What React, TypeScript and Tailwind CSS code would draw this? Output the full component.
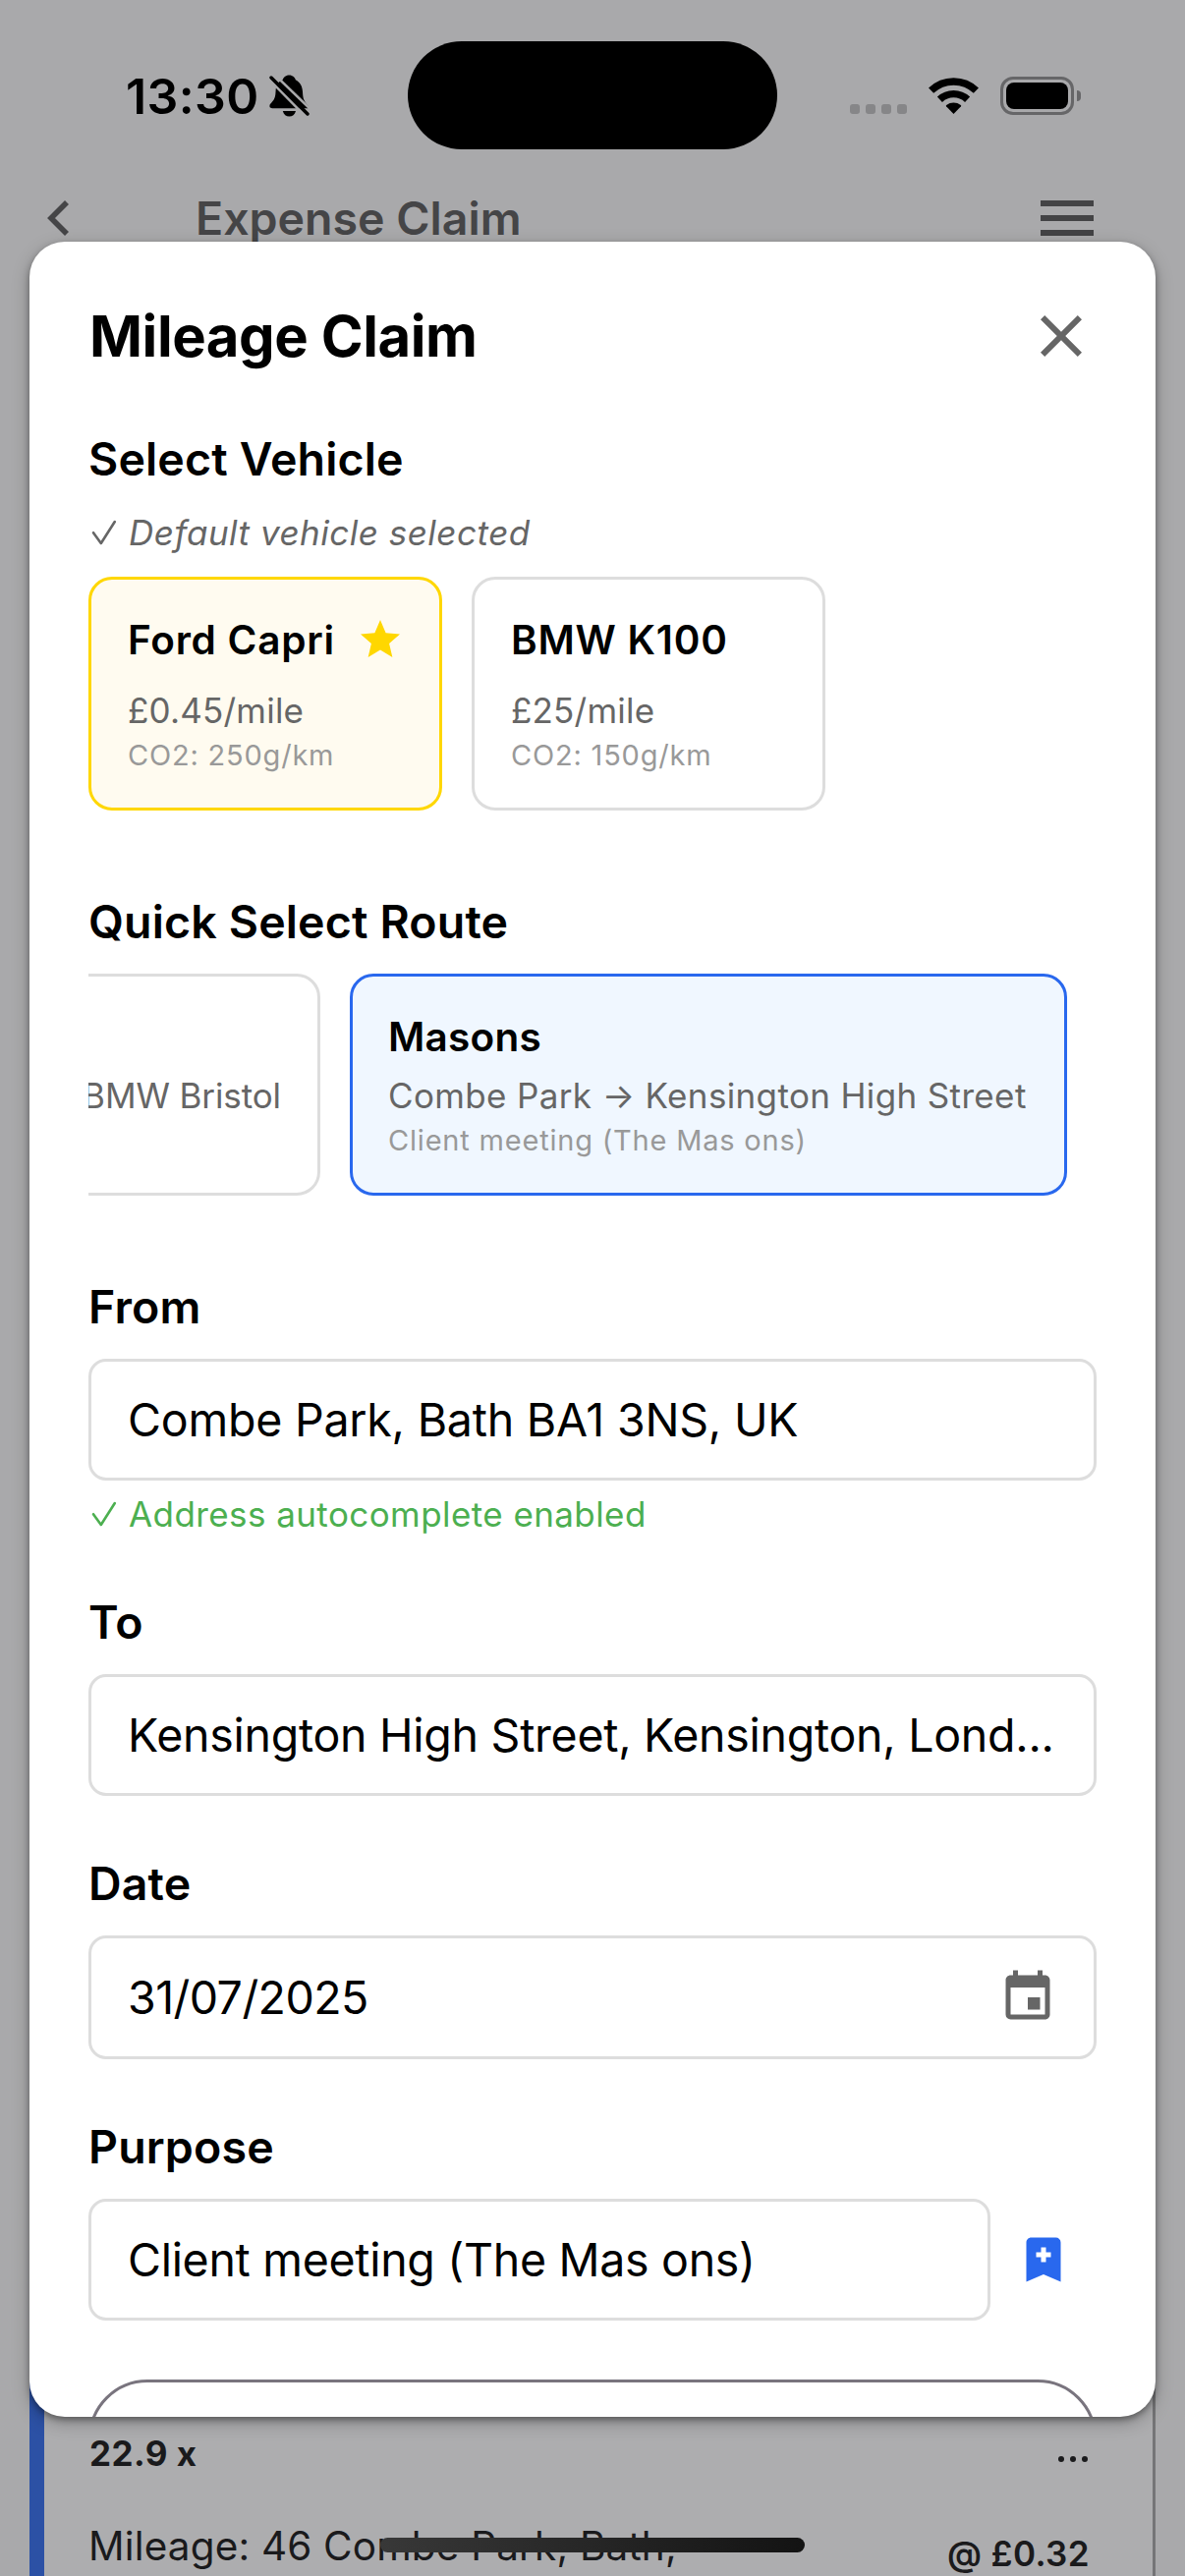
import React from "react";
import { MdClose, MdEvent, MdStar } from "react-icons/md";

interface Vehicle {
  name: string;
  rate: string;
  co2: string;
  isDefault: boolean;
}

const vehicles: Vehicle[] = [
  { name: "Ford Capri", rate: "£0.45/mile", co2: "CO2: 250g/km", isDefault: true },
  { name: "BMW K100", rate: "£25/mile", co2: "CO2: 150g/km", isDefault: false },
];

const BellSlashIcon: React.FC = () => (
  <svg className="w-[41px] h-[43px]" viewBox="0 0 41 43" fill="none">
    <path
      d="M20.3 0.5C24 0.5 26.2 3 26.8 5.2C31.5 7.6 33.8 12 34 17.5C34.2 23.5 35.2 26.5 38 29.8C39.6 31.5 40.5 32.8 39.6 34.2H3C0.6 34.2 0 32.6 0.6 30.8C1.2 29 4.4 27.4 5.8 22.8C6.8 19.5 6.4 15.5 7 13C8 8.5 10.5 6.6 13.8 5.2C14.4 3 16.6 0.5 20.3 0.5Z"
      fill="black"
    />
    <path d="M13.8 37H27C26 40.6 23.6 42.6 20.4 42.6C17.2 42.6 14.8 40.6 13.8 37Z" fill="black" />
    <path d="M4 -1.5L43 36.2" stroke="#a9a9ab" strokeWidth="2.6" />
    <path d="M-2 2.8L37 42.6" stroke="#a9a9ab" strokeWidth="2.6" />
    <path d="M2 3L39 40" stroke="black" strokeWidth="3.4" strokeLinecap="round" />
  </svg>
);

const WifiIcon: React.FC = () => (
  <svg className="w-[51px] h-[37px]" viewBox="0 0 51 37" fill="none">
    <path d="M2.6 13.2A33 33 0 0 1 48.4 13.2" stroke="black" strokeWidth="7.4" />
    <path d="M11.4 22.2A20.5 20.5 0 0 1 39.6 22.2" stroke="black" strokeWidth="7.4" />
    <path
      d="M25.5 37L18 29.3C17.6 28.8 17.7 28.3 18.2 27.9C22.4 24.6 28.6 24.6 32.8 27.9C33.3 28.3 33.4 28.8 33 29.3Z"
      fill="black"
    />
  </svg>
);

const CheckIcon: React.FC = () => (
  <svg className="ml-[3px] mr-[12px] w-[26px] h-[26px]" viewBox="0 0 26 26" fill="none">
    <path
      d="M2 13.2L9.8 24L23.8 2"
      stroke="currentColor"
      strokeWidth="2.6"
      strokeLinecap="round"
      strokeLinejoin="round"
    />
  </svg>
);

const StatusBar: React.FC = () => (
  <div className="flex h-[193px] pt-[42px] pl-[128px]">
    <div className="flex w-[287px] h-[110px] items-center">
      <span className="w-[146px] pt-[2px] text-[50px] leading-[60px] font-semibold tracking-[0.4px] text-black">
        13:30
      </span>
      <BellSlashIcon />
    </div>
    <div className="w-[376px] h-[110px] rounded-full bg-black" />
    <div className="flex h-[110px] ml-[74px] pt-[36px]">
      <div className="flex gap-[6px] pt-[28px]">
        {[0, 1, 2, 3].map((dot) => (
          <div key={dot} className="w-[10px] h-[10px] rounded-[3px] bg-[#868688]" />
        ))}
      </div>
      <div className="ml-[22px] pt-px">
        <WifiIcon />
      </div>
      <div className="ml-[22px] w-[75px] h-[39px] rounded-[13px] border-[3px] border-[#666668] p-[3px]">
        <div className="w-full h-full rounded-[8px] bg-black" />
      </div>
      <div className="mt-[14px] ml-[3px] w-[4px] h-[11px] rounded-r-full bg-[#666668]" />
    </div>
  </div>
);

const PageHeader: React.FC = () => (
  <div className="flex h-[58px] items-center pl-[48px]">
    <svg className="w-[22px] h-[36px]" viewBox="0 0 22 36" fill="none">
      <path d="M20 2L4 18L20 34" stroke="#454547" strokeWidth="5.6" />
    </svg>
    <h1 className="ml-[129px] flex-1 text-[46.5px] leading-[58px] font-semibold text-[#454547]">
      Expense Claim
    </h1>
    <div className="mr-[93px] flex flex-col gap-[9px]">
      <div className="w-[54px] h-[6px] bg-[#434345]" />
      <div className="w-[54px] h-[6px] bg-[#434345]" />
      <div className="w-[54px] h-[6px] bg-[#434345]" />
    </div>
  </div>
);

const ExpenseRow: React.FC = () => (
  <div className="mx-[30px] flex flex-1 justify-between border-l-[15px] border-r-[3px] border-l-[#2c51a5] border-r-[#757577] bg-[#adadaf] pl-[45px] pr-[64px] text-[#1a1a1c]">
    <div className="flex flex-col justify-end">
      <p className="pl-px text-[35px] leading-[48px] font-bold tracking-[0.5px]">22.9 x</p>
      <p className="mt-[41px] text-[40.5px] leading-[60px] tracking-[0.16px]">
        Mileage: 46 Combe Park, Bath,
      </p>
    </div>
    <div className="flex flex-col items-end justify-end">
      <div className="mr-[2px] flex gap-[6px]">
        <div className="w-[6px] h-[6px] rounded-full bg-[#1a1a1c]" />
        <div className="w-[6px] h-[6px] rounded-full bg-[#1a1a1c]" />
        <div className="w-[6px] h-[6px] rounded-full bg-[#1a1a1c]" />
      </div>
      <p className="mt-[69px] -mb-px text-[35px] leading-[48px] font-semibold tracking-[0.4px]">
        @ £0.32
      </p>
    </div>
  </div>
);

const SectionTitle: React.FC<{ children: React.ReactNode }> = ({ children }) => (
  <h3 className="text-[46.5px] leading-[60px] font-semibold tracking-[0.15px] whitespace-nowrap">
    {children}
  </h3>
);

const VehicleCard: React.FC<{ vehicle: Vehicle }> = ({ vehicle }) => (
  <div
    className={
      vehicle.isDefault
        ? "w-[360px] h-[238px] rounded-[24px] border-[3px] border-[#ffd700] bg-[#fffbf0] pt-[37px] pl-[37px]"
        : "w-[360px] h-[238px] rounded-[24px] border-[3px] border-[#dddddd] bg-white pt-[37px] pl-[37px]"
    }
  >
    <div className="flex h-[48px] items-center">
      <span className="pt-px text-[40.5px] leading-[48px] font-semibold tracking-[0.75px] whitespace-nowrap">
        {vehicle.name}
      </span>
      {vehicle.isDefault && <MdStar className="ml-[22px] size-[48px] shrink-0 text-[#ffd700]" />}
    </div>
    <p className="mt-[27px] text-[35px] leading-[42px] tracking-[0.2px] text-[#666666]">
      {vehicle.rate}
    </p>
    <p className="mt-[7px] text-[29px] leading-[36px] tracking-[0.8px] text-[#999999]">
      {vehicle.co2}
    </p>
  </div>
);

const App: React.FC = () => {
  return (
    <div className="relative w-[1206px] h-[2622px] overflow-hidden bg-[#a9a9ab] font-[Inter,'Liberation_Sans',sans-serif] text-black">
      {/* Dimmed page behind the dialog */}
      <div className="flex h-full flex-col">
        <StatusBar />
        <PageHeader />
        <div className="h-[1950px]" />
        <ExpenseRow />
      </div>

      {/* Mileage dialog */}
      <div className="absolute left-[30px] top-[246px] w-[1146px] h-[2214px] overflow-hidden rounded-[36px] bg-white px-[60px] pt-[60px] shadow-[0_6px_18px_rgba(0,0,0,0.25),0_3px_6px_rgba(0,0,0,0.35)]">
        <div className="flex h-[72px] items-center justify-between">
          <h2 className="pl-px text-[58px] leading-[72px] font-bold tracking-[-0.43px]">
            Mileage Claim
          </h2>
          <MdClose className="size-[72px] text-[#666666]" />
        </div>

        {/* Vehicle */}
        <section className="mt-[59px]">
          <SectionTitle>Select Vehicle</SectionTitle>
          <div className="mt-[21px] flex items-center text-[#666666]">
            <CheckIcon />
            <p className="text-[35px] leading-[48px] italic tracking-[0.5px]">
              Default vehicle selected
            </p>
          </div>
          <div className="mt-[21px] flex gap-[30px]">
            {vehicles.map((vehicle) => (
              <VehicleCard key={vehicle.name} vehicle={vehicle} />
            ))}
          </div>
        </section>

        {/* Saved routes, scrolled to the end */}
        <section className="mt-[83px]">
          <SectionTitle>Quick Select Route</SectionTitle>
          <div className="mt-[23px] flex h-[226px] justify-end gap-[30px] overflow-hidden pr-[30px]">
            <div className="w-[700px] shrink-0 rounded-[24px] border-[3px] border-[#dddddd] pt-[37px] pr-[37px] text-right">
              <p className="mt-[63px] text-[35px] leading-[42px] tracking-[-0.1px] text-[#666666]">
                BMW Bristol
              </p>
            </div>
            <div className="w-[730px] shrink-0 rounded-[24px] border-[3px] border-[#2968ee] bg-[#f0f7ff] pt-[38px] pl-[36px] whitespace-nowrap">
              <p className="text-[40.5px] leading-[48px] font-semibold tracking-[0.24px]">Masons</p>
              <p className="mt-[14px] text-[35px] leading-[42px] tracking-[0.36px] text-[#666666]">
                Combe Park → Kensington High Street
              </p>
              <p className="mt-[7px] text-[29px] leading-[36px] tracking-[0.8px] text-[#999999]">
                Client meeting (The Mas ons)
              </p>
            </div>
          </div>
        </section>

        {/* From */}
        <section className="mt-[83px]">
          <SectionTitle>From</SectionTitle>
          <div className="mt-[23px] flex h-[124px] items-center rounded-[18px] border-[3px] border-[#dddddd] pl-[37px]">
            <span className="text-[46.5px] leading-[60px] tracking-[-0.22px]">
              Combe Park, Bath BA1 3NS, UK
            </span>
          </div>
          <div className="mt-[10px] flex items-center text-[#4caf50]">
            <CheckIcon />
            <p className="text-[35px] leading-[48px] tracking-[0.42px]">
              Address autocomplete enabled
            </p>
          </div>
        </section>

        {/* To */}
        <section className="mt-[56px]">
          <SectionTitle>To</SectionTitle>
          <div className="mt-[23px] flex h-[124px] items-center rounded-[18px] border-[3px] border-[#dddddd] pl-[37px]">
            <span className="text-[46.5px] leading-[60px] tracking-[-0.27px] whitespace-nowrap">
              Kensington High Street, Kensington, Lond...
            </span>
          </div>
        </section>

        {/* Date */}
        <section className="mt-[59px]">
          <SectionTitle>Date</SectionTitle>
          <div className="mt-[23px] flex h-[126px] items-center justify-between rounded-[18px] border-[3px] border-[#dddddd] pl-[37px] pr-[37px]">
            <span className="text-[46.5px] leading-[60px] tracking-[-0.55px]">31/07/2025</span>
            <MdEvent className="size-[60px] text-[#666666]" />
          </div>
        </section>

        {/* Purpose */}
        <section className="mt-[59px]">
          <SectionTitle>Purpose</SectionTitle>
          <div className="mt-[23px] flex items-center gap-[24px]">
            <div className="flex w-[918px] h-[124px] items-center rounded-[18px] border-[3px] border-[#dddddd] pl-[37px]">
              <span className="text-[46.5px] leading-[60px] tracking-[-0.3px]">
                Client meeting (The Mas ons)
              </span>
            </div>
            <svg className="size-[60px]" viewBox="0 0 24 24">
              <path
                d="M17 3A2 2 0 0 1 19 5V21L12 18L5 21V5C5 3.89 5.9 3 7 3H17M11 7V9H9V11H11V13H13V11H15V9H13V7H11Z"
                fill="#2968ee"
              />
            </svg>
          </div>
        </section>

        <button className="mt-[60px] block w-full h-[120px] rounded-full border-[3px] border-[#79747e]" />
      </div>

      {/* Home indicator */}
      <div className="absolute left-[387px] top-[2583px] w-[432px] h-[15px] rounded-full bg-linear-to-r from-[#383838] via-[#262626] to-[#131313]" />
    </div>
  );
};

export default App;
